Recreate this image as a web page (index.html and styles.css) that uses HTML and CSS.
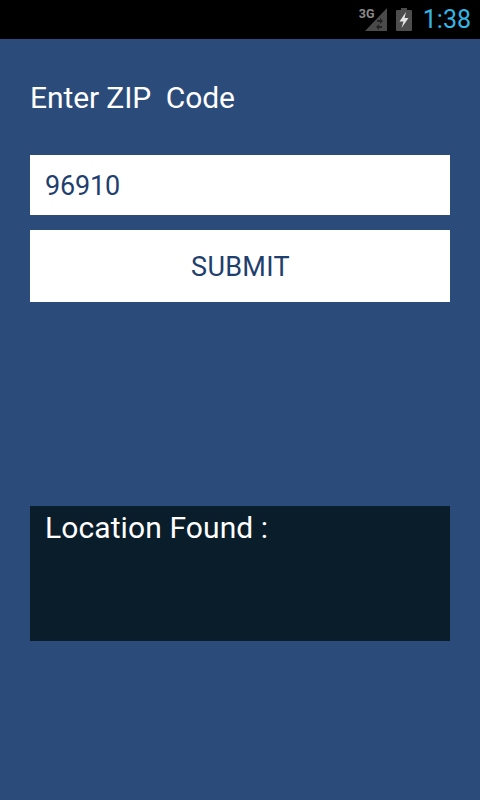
FILE: index.html
```html
<!DOCTYPE html>
<html>
<head>
  <meta charset="utf-8" />
  <title>Enter ZIP Code</title>
  <link rel="stylesheet" href="styles.css">
</head>
<body>
<div class="statusbar">
  <div class="signal">
    <span class="signal_label">3G</span>
    <svg class="signal_icon" width="22" height="23" viewBox="0 0 22 23">
      <path d="M22 0V23H0Z" fill="#4a4a4a"/>
      <path d="M12 12h3v-2l3 3-3 3v-2h-3zM17 20h-3v2l-3-3 3-3v2h3z" fill="#222"/>
    </svg>
  </div>
  <svg class="battery_icon" width="16" height="23" viewBox="0 0 16 23">
    <path d="M5 0h6v2h4a1 1 0 0 1 1 1v19a1 1 0 0 1-1 1H1a1 1 0 0 1-1-1V3a1 1 0 0 1 1-1h4z" fill="#4d4d4d"/>
    <path d="M10 4 3.500 13.500H7.500L5.500 20 12.500 10H8.500Z" fill="#e6e6e6"/>
  </svg>
  <span class="clock">1:38</span>
</div>
<div class="content">
  <div class="title">Enter ZIP&nbsp; Code</div>
  <div class="zip_field">96910</div>
  <div class="submit_btn">SUBMIT</div>
  <div class="result_box">Location Found :</div>
</div>
</body>
</html>
```

FILE: styles.css
```css
* {
  margin: 0;
  padding: 0;
  box-sizing: border-box;
  font-family: "Roboto", sans-serif;
}
html, body {
  width: 480px;
  height: 800px;
  overflow: hidden;
}
body {
  background-color: #2b4c7a;
}
.statusbar {
  height: 39px;
  background-color: #000;
  display: flex;
  align-items: center;
  justify-content: flex-end;
  padding-right: 9px;
}
.signal {
  display: flex;
  position: relative;
  margin-right: 9px;
}
.signal_label {
  position: absolute;
  left: -6px;
  top: 0;
  font-size: 12.500px;
  line-height: 12px;
  font-weight: 700;
  color: #8a8a8a;
}
.battery_icon {
  margin-right: 11px;
}
.clock {
  font-size: 25px;
  color: #33b5e5;
}
.content {
  padding: 0 30px;
}
.title {
  height: 116px;
  padding-top: 42px;
  font-size: 30px;
  line-height: 34px;
  letter-spacing: -0.1px;
  color: #fff;
}
.zip_field {
  height: 60px;
  margin-bottom: 15px;
  padding-left: 15px;
  background-color: #fff;
  font-size: 27px;
  line-height: 62px;
  letter-spacing: -0.2px;
  color: #1f3f6e;
}
.submit_btn {
  height: 72px;
  margin-bottom: 204px;
  padding-left: 1px;
  background-color: #fff;
  font-size: 27px;
  line-height: 74px;
  letter-spacing: 0.3px;
  text-align: center;
  color: #1f3f6e;
}
.result_box {
  height: 135px;
  padding-left: 15px;
  background-color: #0a1d2b;
  font-size: 30px;
  line-height: 44px;
  letter-spacing: 0.1px;
  color: #fff;
}
```
